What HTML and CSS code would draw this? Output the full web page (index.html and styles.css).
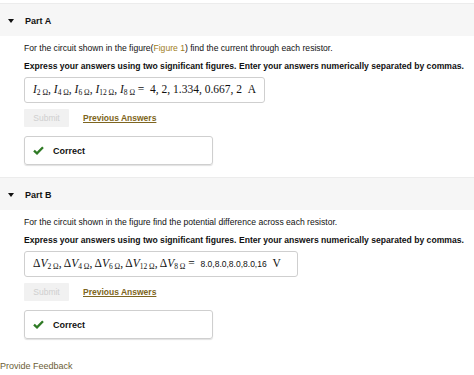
FILE: index.html
```html
<!DOCTYPE html>
<html>
<head>
<meta charset="utf-8">
<link rel="stylesheet" href="styles.css">
</head>
<body>
<div class="part">
  <div class="part-head"><span class="caret"></span><span class="part-title">Part A</span></div>
  <div class="part-body">
    <p class="desc">For the circuit shown in the figure(<span class="fig-link">Figure 1</span>) find the current through each resistor.</p>
    <p class="instr">Express your answers using two significant figures. Enter your answers numerically separated by commas.</p>
    <div class="answer answer-a">
      <span class="math"><i>I</i><sub>2 Ω</sub>, <i>I</i><sub>4 Ω</sub>, <i>I</i><sub>6 Ω</sub>, <i>I</i><sub>12 Ω</sub>, <i>I</i><sub>8 Ω</sub> = &nbsp;4, 2, 1.334, 0.667, 2 &nbsp;A</span>
    </div>
    <div class="actions"><span class="submit">Submit</span><span class="prev">Previous Answers</span></div>
    <div class="result"><svg class="check" width="11" height="9" viewBox="0 0 11 9"><path d="M1 4.6 L4 7.4 L10 1.2" fill="none" stroke="#2f7a25" stroke-width="2.3"/></svg><span>Correct</span></div>
  </div>
</div>
<div class="part part-b">
  <div class="part-head"><span class="caret"></span><span class="part-title">Part B</span></div>
  <div class="part-body">
    <p class="desc">For the circuit shown in the figure find the potential difference across each resistor.</p>
    <p class="instr">Express your answers using two significant figures. Enter your answers numerically separated by commas.</p>
    <div class="answer answer-b">
      <span class="math">Δ<i>V</i><sub>2 Ω</sub>, Δ<i>V</i><sub>4 Ω</sub>, Δ<i>V</i><sub>6 Ω</sub>, Δ<i>V</i><sub>12 Ω</sub>, Δ<i>V</i><sub>8 Ω</sub> = &nbsp;<span class="plain">8.0,8.0,8.0,8.0,16</span> &nbsp;V</span>
    </div>
    <div class="actions"><span class="submit">Submit</span><span class="prev">Previous Answers</span></div>
    <div class="result"><svg class="check" width="11" height="9" viewBox="0 0 11 9"><path d="M1 4.6 L4 7.4 L10 1.2" fill="none" stroke="#2f7a25" stroke-width="2.3"/></svg><span>Correct</span></div>
  </div>
</div>
<div class="feedback">Provide Feedback</div>
</body>
</html>
```
FILE: styles.css
```css
html, body {
  margin: 0;
  padding: 0;
  background: #fff;
}
body {
  font-family: "Liberation Sans", Arial, sans-serif;
  color: #111;
  padding-top: 3px;
  overflow: hidden;
}
.part {
  border-top: 1px solid #ececec;
}
.part-b {
  margin-top: 12px;
}
.part-head {
  height: 32px;
  background: #f6f6f6;
  display: flex;
  align-items: center;
}
.caret {
  width: 0;
  height: 0;
  border-left: 3.5px solid transparent;
  border-right: 3.5px solid transparent;
  border-top: 4px solid #111;
  margin-left: 8px;
  margin-top: 1px;
}
.part-title {
  margin-left: 11px;
  font-weight: bold;
  font-size: 9px;
  margin-top: 2px;
}
.part-body {
  padding-left: 24px;
  padding-top: 6px;
}
.desc, .instr {
  margin: 0;
  font-size: 8.6px;
  line-height: 12px;
  white-space: nowrap;
}
.instr {
  margin-top: 6px;
  font-weight: bold;
}
.fig-link {
  color: #a07d1c;
}
.answer {
  margin-top: 5px;
  height: 24px;
  border: 1px solid #cfcfcf;
  border-radius: 3px;
  display: flex;
  align-items: center;
  padding-left: 8px;
  box-sizing: content-box;
}
.answer-a { width: 231px; }
.answer-b { width: 264px; }
.math {
  font-family: "Liberation Serif", "Times New Roman", serif;
  font-size: 11.5px;
  white-space: nowrap;
}
.math i {
  font-style: italic;
}
.math sub {
  font-size: 7.5px;
  vertical-align: -2px;
}
.plain {
  font-family: "Liberation Sans", Arial, sans-serif;
  font-size: 8.5px;
}
.actions {
  margin-top: 6px;
  display: flex;
  align-items: center;
  gap: 14px;
}
.submit {
  width: 45px;
  height: 18px;
  background: #f1f1f1;
  color: #cfcfcf;
  font-size: 8.5px;
  display: flex;
  align-items: center;
  justify-content: center;
  border-radius: 1px;
}
.prev {
  font-size: 8.5px;
  font-weight: bold;
  color: #7d6520;
  text-decoration: underline;
}
.result {
  margin-top: 9px;
  width: 187px;
  height: 27px;
  border: 1px solid #cfcfcf;
  border-radius: 3px;
  box-shadow: 0 1px 1px rgba(0,0,0,0.12);
  display: flex;
  align-items: center;
  font-weight: bold;
  font-size: 9px;
}
.check {
  margin-left: 8px;
  margin-right: 9px;
}
.feedback {
  margin-top: 22px;
  margin-left: 0;
  font-size: 9px;
  line-height: 11px;
  color: #6b5d35;
}
```
